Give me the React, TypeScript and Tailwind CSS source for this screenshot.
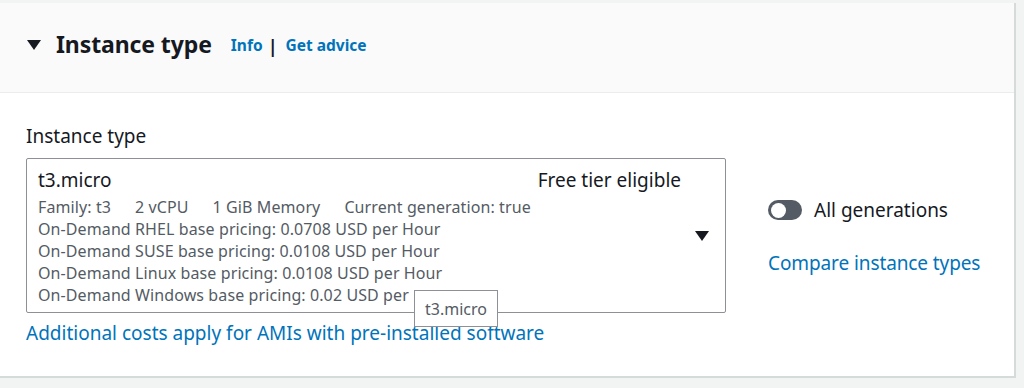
const font = { fontFamily: '"Noto Sans", "Open Sans", Arial, sans-serif' };

const pricing = [
  'On-Demand RHEL base pricing: 0.0708 USD per Hour',
  'On-Demand SUSE base pricing: 0.0108 USD per Hour',
  'On-Demand Linux base pricing: 0.0108 USD per Hour',
];

export default function App() {
  return (
    <div className="w-[1024px] h-[388px] overflow-hidden bg-[#f2f3f3] pt-[3px]" style={font}>
      <div className="w-[1016px] bg-white border-r-2 border-b-2 border-[#d5dbdb]">
        {/* Header */}
        <div className="h-[90px] bg-[#fafafa] border-b border-[#eaeded] flex items-center pl-[27px] pb-[6px]">
          <svg width="14" height="10" viewBox="0 0 14 10" className="mr-[15px] mt-[1px]">
            <path d="M0 0h14L7 10z" fill="#16191f" />
          </svg>
          <h2 className="text-[23px] font-bold text-[#16191f] tracking-[-0.1px]">Instance type</h2>
          <div className="ml-[19px] mt-[3px] flex items-center text-[15.5px] font-bold text-[#0073bb]">
            <span>Info</span>
            <span className="ml-[5px] mr-[8px] text-[#16191f] text-[18px] leading-none">|</span>
            <span>Get advice</span>
          </div>
        </div>

        {/* Body */}
        <div className="px-[26px] pt-[31px] h-[283px]">
          <div className="text-[19px] leading-[24px] text-[#16191f]">Instance type</div>
          <div className="flex mt-[10px]">
            <div className="relative w-[700px] h-[155px] border border-[#8d9096] rounded-[2px] pl-[11px] pr-[44px] pt-[10px]">
              <div className="flex justify-between">
                <span className="text-[19px] leading-[22px] text-[#16191f]">t3.micro</span>
                <span className="text-[19px] leading-[22px] text-[#16191f]">Free tier eligible</span>
              </div>
              <div className="mt-[5px] text-[16px] leading-[22px] text-[#545b64] tracking-[0.1px]">
                <div className="flex gap-[24px]">
                  <span>Family: t3</span>
                  <span>2 vCPU</span>
                  <span>1 GiB Memory</span>
                  <span>Current generation: true</span>
                </div>
                {pricing.map((p) => (
                  <div key={p} className="whitespace-nowrap">{p}</div>
                ))}
                {/* last line runs under the tooltip */}
                <div className="w-[375px] whitespace-nowrap overflow-hidden">
                  On-Demand Windows base pricing: 0.02 USD per Hour
                </div>
              </div>
              <svg width="14" height="10" viewBox="0 0 14 10" className="absolute right-[16px] top-[72px]">
                <path d="M0 0h14L7 10z" fill="#16191f" />
              </svg>
              <div className="absolute left-[387px] top-[131px] w-[84px] h-[37px] bg-white border border-[#8d9096] flex items-center justify-center text-[16px] text-[#545b64]">
                t3.micro
              </div>
            </div>
            <div className="ml-[42px] pt-[39px]">
              <div className="flex items-center gap-[12px] h-[26px]">
                <div className="w-[34px] h-[20px] rounded-full bg-[#545b64] p-[3px] flex items-center">
                  <div className="w-[15px] h-[15px] rounded-full bg-white" />
                </div>
                <span className="text-[19px] leading-[26px] text-[#16191f]">All generations</span>
              </div>
              <div className="mt-[27px] text-[19px] leading-[26px] text-[#0073bb] tracking-[-0.1px]">Compare instance types</div>
            </div>
          </div>
          <div className="mt-[7px] text-[19px] leading-[26px] text-[#0073bb]">
            Additional costs apply for AMIs with pre-installed software
          </div>
        </div>
      </div>
    </div>
  );
}
